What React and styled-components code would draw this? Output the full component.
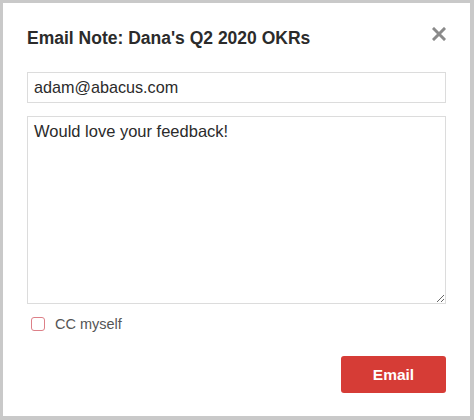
import React from 'react'
import styled, { createGlobalStyle } from 'styled-components'

const GlobalStyle = createGlobalStyle`
  html, body {
    margin: 0;
    padding: 0;
    background: #c9c9c9;
  }
  body {
    font-family: 'Liberation Sans', Arial, sans-serif;
  }
`

export default function App() {
  return (
    <>
      <GlobalStyle />
      <Backdrop>
        <Modal>
          <Header>
            <Title>Email Note: Dana's Q2 2020 OKRs</Title>
            <CloseButton aria-label="Close">
              <svg width="14" height="14" viewBox="0 0 14 14">
                <path
                  d="M2 2 L12 12 M12 2 L2 12"
                  stroke="#8a8a8a"
                  strokeWidth="3"
                  strokeLinecap="square"
                />
              </svg>
            </CloseButton>
          </Header>
          <EmailInput type="text" defaultValue="adam@abacus.com" />
          <NoteArea defaultValue="Would love your feedback!" />
          <CheckRow>
            <CheckBox type="checkbox" />
            <CheckLabel>CC myself</CheckLabel>
          </CheckRow>
          <Footer>
            <SendButton>Email</SendButton>
          </Footer>
        </Modal>
      </Backdrop>
    </>
  )
}

const Backdrop = styled.div`
  width: 474px;
  height: 420px;
  box-sizing: border-box;
  padding: 3px 4px 4px 3px;
`

const Modal = styled.div`
  height: 100%;
  box-sizing: border-box;
  background: #fff;
  padding: 24px 24px 23px 24px;
  display: flex;
  flex-direction: column;
`

const Header = styled.div`
  display: flex;
  align-items: flex-start;
  justify-content: space-between;
  height: 45px;
`

const Title = styled.h2`
  margin: 0;
  font-size: 17.5px;
  line-height: 22px;
  font-weight: bold;
  color: #2b2b2b;
`

const CloseButton = styled.button`
  border: none;
  background: none;
  padding: 0;
  margin: 0;
  width: 14px;
  height: 14px;
  display: flex;
  cursor: pointer;
`

const EmailInput = styled.input`
  box-sizing: border-box;
  width: 100%;
  height: 31px;
  margin: 0;
  padding: 0 6px;
  border: 1px solid #dcdcdc;
  border-radius: 0;
  font-family: 'Liberation Sans', Arial, sans-serif;
  font-size: 16.2px;
  color: #2b2b2b;
  outline: none;
`

const NoteArea = styled.textarea`
  box-sizing: border-box;
  width: 100%;
  height: 188px;
  margin: 13px 0 0;
  padding: 5px 6px;
  border: 1px solid #dcdcdc;
  border-radius: 0;
  font-family: 'Liberation Sans', Arial, sans-serif;
  font-size: 16.5px;
  line-height: 19px;
  color: #2b2b2b;
  outline: none;
`

const CheckRow = styled.label`
  display: flex;
  align-items: center;
  gap: 10px;
  margin-top: 13px;
  padding-left: 4px;
  height: 14px;
`

const CheckBox = styled.input`
  appearance: none;
  margin: 0;
  width: 14px;
  height: 14px;
  box-sizing: border-box;
  border: 1.5px solid #dd8088;
  border-radius: 3px;
  background: #fff;
`

const CheckLabel = styled.span`
  font-size: 14.5px;
  color: #555;
`

const Footer = styled.div`
  margin-top: auto;
  display: flex;
  justify-content: flex-end;
`

const SendButton = styled.button`
  width: 105px;
  height: 37px;
  border: none;
  border-radius: 3px;
  background: #d63c36;
  color: #fff;
  font-family: 'Liberation Sans', Arial, sans-serif;
  font-size: 15.5px;
  font-weight: bold;
  cursor: pointer;
`
